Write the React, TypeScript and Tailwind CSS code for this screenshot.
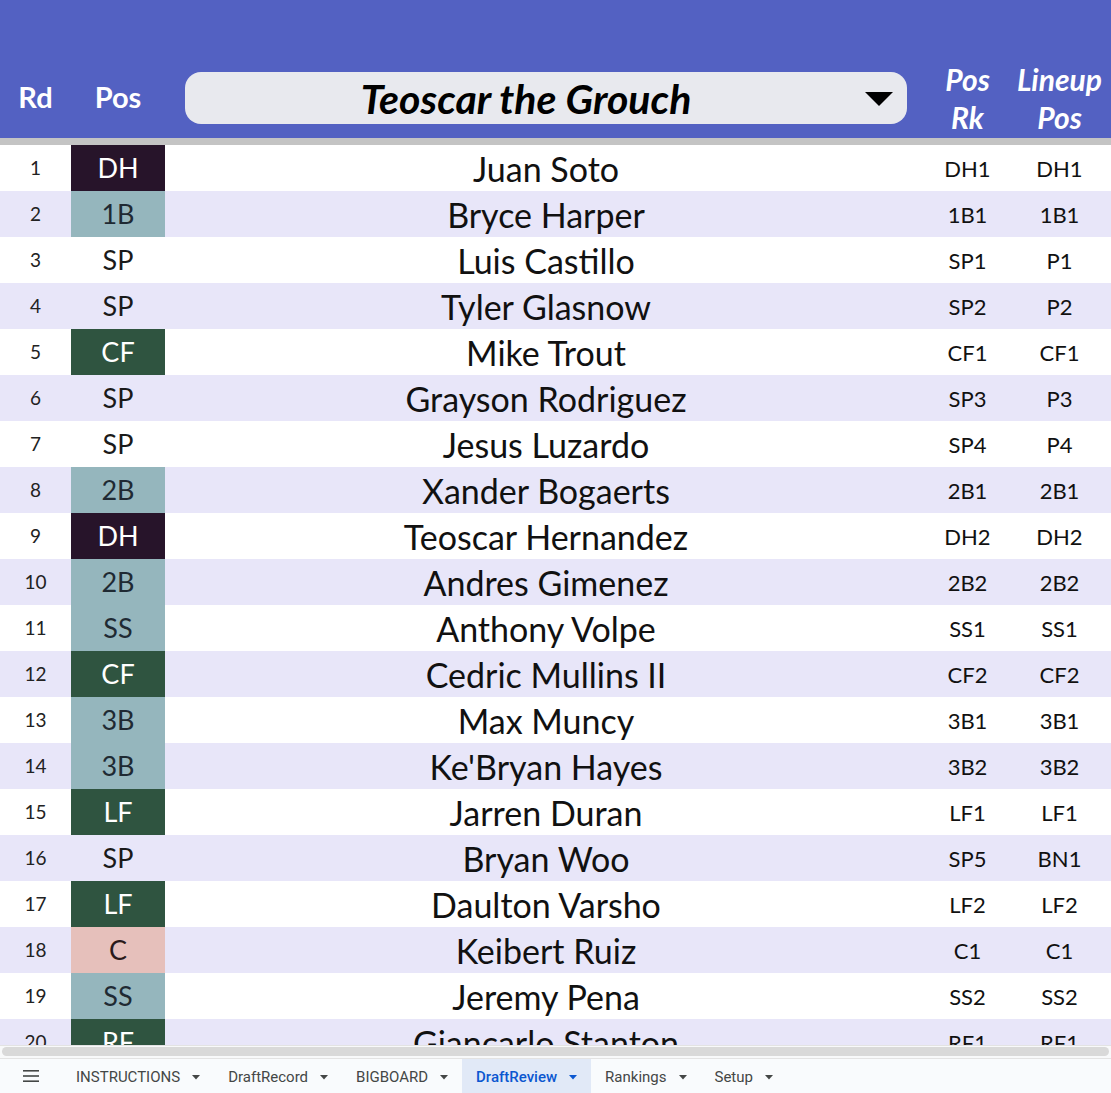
type Pick = { rd: number; pos: string; name: string; rk: string; lineup: string };

const picks: Pick[] = [
  { rd: 1, pos: "DH", name: "Juan Soto", rk: "DH1", lineup: "DH1" },
  { rd: 2, pos: "1B", name: "Bryce Harper", rk: "1B1", lineup: "1B1" },
  { rd: 3, pos: "SP", name: "Luis Castillo", rk: "SP1", lineup: "P1" },
  { rd: 4, pos: "SP", name: "Tyler Glasnow", rk: "SP2", lineup: "P2" },
  { rd: 5, pos: "CF", name: "Mike Trout", rk: "CF1", lineup: "CF1" },
  { rd: 6, pos: "SP", name: "Grayson Rodriguez", rk: "SP3", lineup: "P3" },
  { rd: 7, pos: "SP", name: "Jesus Luzardo", rk: "SP4", lineup: "P4" },
  { rd: 8, pos: "2B", name: "Xander Bogaerts", rk: "2B1", lineup: "2B1" },
  { rd: 9, pos: "DH", name: "Teoscar Hernandez", rk: "DH2", lineup: "DH2" },
  { rd: 10, pos: "2B", name: "Andres Gimenez", rk: "2B2", lineup: "2B2" },
  { rd: 11, pos: "SS", name: "Anthony Volpe", rk: "SS1", lineup: "SS1" },
  { rd: 12, pos: "CF", name: "Cedric Mullins II", rk: "CF2", lineup: "CF2" },
  { rd: 13, pos: "3B", name: "Max Muncy", rk: "3B1", lineup: "3B1" },
  { rd: 14, pos: "3B", name: "Ke'Bryan Hayes", rk: "3B2", lineup: "3B2" },
  { rd: 15, pos: "LF", name: "Jarren Duran", rk: "LF1", lineup: "LF1" },
  { rd: 16, pos: "SP", name: "Bryan Woo", rk: "SP5", lineup: "BN1" },
  { rd: 17, pos: "LF", name: "Daulton Varsho", rk: "LF2", lineup: "LF2" },
  { rd: 18, pos: "C", name: "Keibert Ruiz", rk: "C1", lineup: "C1" },
  { rd: 19, pos: "SS", name: "Jeremy Pena", rk: "SS2", lineup: "SS2" },
  { rd: 20, pos: "RF", name: "Giancarlo Stanton", rk: "RF1", lineup: "RF1" },
];

// position cell colours
const posClass: Record<string, string> = {
  DH: "bg-[#27142a] text-white",
  "1B": "bg-[#95b6bd] text-[#1f2a33]",
  "2B": "bg-[#95b6bd] text-[#1f2a33]",
  "3B": "bg-[#95b6bd] text-[#1f2a33]",
  SS: "bg-[#95b6bd] text-[#1f2a33]",
  CF: "bg-[#2f5440] text-white",
  LF: "bg-[#2f5440] text-white",
  RF: "bg-[#2f5440] text-white",
  C: "bg-[#e6c0bb] text-[#2a1a1a]",
  SP: "text-[#1a1a1a]",
};

const tabs = ["INSTRUCTIONS", "DraftRecord", "BIGBOARD", "DraftReview", "Rankings", "Setup"];

export default function App() {
  return (
    <div className="w-[1111px] h-[1093px] flex flex-col overflow-hidden bg-white font-['Lato',sans-serif]">
      {/* Header */}
      <div className="h-[138px] shrink-0 bg-[#5361c2] flex items-end pb-[14px] text-white">
        <div className="w-[71px] text-center text-[29px] font-bold mb-[6px]">Rd</div>
        <div className="w-[94px] text-center text-[29px] font-bold mb-[6px]">Pos</div>
        <div className="w-[762px] pl-[20px] pr-[20px]">
          <div className="h-[52px] rounded-[16px] bg-[#e8e9ee] flex items-center relative">
            <div className="flex-1 text-center text-[41px] font-bold italic text-black pr-[40px] pt-[2px]">
              Teoscar the Grouch
            </div>
            <svg className="absolute right-[14px] top-[20px]" width="28" height="14" viewBox="0 0 28 14">
              <polygon points="0,0 28,0 14,14" fill="#000" />
            </svg>
          </div>
        </div>
        <div className="w-[81px] text-center text-[30px] font-bold italic leading-[38px] -mb-[12px]">
          <div>Pos</div>
          <div>Rk</div>
        </div>
        <div className="w-[103px] text-center text-[30px] font-bold italic leading-[38px] -mb-[12px]">
          <div>Lineup</div>
          <div>Pos</div>
        </div>
      </div>
      <div className="h-[7px] shrink-0 bg-[#c4c4c4]" />

      {/* Rows */}
      <div className="flex-1 overflow-hidden">
        {picks.map((p) => (
          <div
            key={p.rd}
            className={`h-[46px] flex items-center ${p.rd % 2 === 0 ? "bg-[#e8e6f9]" : "bg-white"}`}
          >
            <div className="w-[71px] text-center text-[19px] text-[#222]">{p.rd}</div>
            <div className={`w-[94px] h-full flex items-center justify-center text-[27px] ${posClass[p.pos]}`}>
              {p.pos}
            </div>
            <div className="w-[762px] text-center text-[34px] text-[#111]">{p.name}</div>
            <div className="w-[81px] text-center text-[22px] text-[#111]">{p.rk}</div>
            <div className="w-[103px] text-center text-[22px] text-[#111]">{p.lineup}</div>
          </div>
        ))}
      </div>

      {/* horizontal scrollbar */}
      <div className="h-[13px] shrink-0 bg-[#f8f9fa] border-t border-[#e3e3e3] px-[2px] pt-[1px]">
        <div className="h-[9px] rounded-full bg-[#d9d9d9]" />
      </div>

      {/* Sheet tabs */}
      <div className="h-[35px] shrink-0 bg-[#f9fbfd] border-t border-[#e3e3e3] flex items-stretch font-['Roboto',sans-serif] text-[15px] text-[#444746]">
        <div className="w-[62px] flex items-center justify-center">
          <svg width="16" height="12" viewBox="0 0 16 12">
            <rect x="0" y="0" width="16" height="1.6" fill="#444746" />
            <rect x="0" y="5.2" width="16" height="1.6" fill="#444746" />
            <rect x="0" y="10.4" width="16" height="1.6" fill="#444746" />
          </svg>
        </div>
        {tabs.map((t) => {
          const active = t === "DraftReview";
          return (
            <div
              key={t}
              className={`flex items-center gap-[12px] px-[14px] pt-[2px] ${
                active ? "bg-[#e1e9f7] text-[#0b57d0] font-medium" : ""
              }`}
            >
              <span>{t}</span>
              <svg width="8" height="5" viewBox="0 0 8 5">
                <polygon points="0,0 8,0 4,4.5" fill={active ? "#0b57d0" : "#444746"} />
              </svg>
            </div>
          );
        })}
      </div>
    </div>
  );
}
